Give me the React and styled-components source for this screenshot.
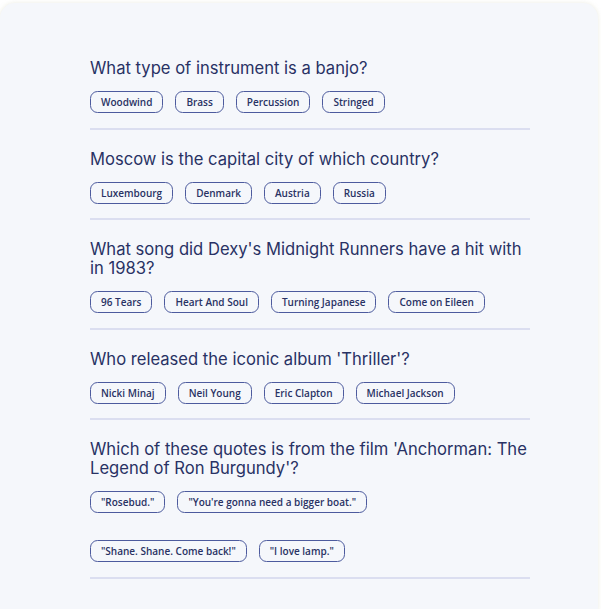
import React from 'react';
import styled, { createGlobalStyle } from 'styled-components';

const GlobalStyle = createGlobalStyle`
  body {
    margin: 0;
    background: #ffffff;
    font-family: Inter, "Liberation Sans", sans-serif;
  }
`;

const Card = styled.main`
  margin-top: 3px;
  width: 598px;
  min-height: 620px;
  box-sizing: border-box;
  background: #f5f7fb;
  border-radius: 15px;
  box-shadow: 0 0 4px rgba(200, 200, 170, 0.35);
  padding: 56px 68px 0 90px;
`;

const Question = styled.section`
  border-bottom: 2px solid #dbdef0;
  padding: 0 0 14.5px;
  margin-bottom: 20px;
`;

const Title = styled.h2`
  margin: 0 0 13px;
  font-family: Inter, "Liberation Sans", sans-serif;
  font-size: 16.6px;
  line-height: 19px;
  font-weight: 400;
  color: #293264;
`;

const Answers = styled.div`
  display: flex;
  flex-wrap: wrap;
  column-gap: 12px;
  row-gap: 27px;
`;

const Answer = styled.button`
  font-family: "Open Sans", "Noto Sans", sans-serif;
  font-size: 10px;
  line-height: 12px;
  font-weight: 600;
  color: #293264;
  background: transparent;
  border: 1px solid #4d5b9e;
  border-radius: 7.5px;
  padding: 4px 10px;
  cursor: pointer;
`;

const questions = [
  {
    q: 'What type of instrument is a banjo?',
    a: ['Woodwind', 'Brass', 'Percussion', 'Stringed'],
  },
  {
    q: 'Moscow is the capital city of which country?',
    a: ['Luxembourg', 'Denmark', 'Austria', 'Russia'],
  },
  {
    q: "What song did Dexy's Midnight Runners have a hit with in 1983?",
    a: ['96 Tears', 'Heart And Soul', 'Turning Japanese', 'Come on Eileen'],
  },
  {
    q: "Who released the iconic album 'Thriller'?",
    a: ['Nicki Minaj', 'Neil Young', 'Eric Clapton', 'Michael Jackson'],
  },
  {
    q: "Which of these quotes is from the film 'Anchorman: The Legend of Ron Burgundy'?",
    a: [
      '"Rosebud."',
      '"You\'re gonna need a bigger boat."',
      '"Shane. Shane. Come back!"',
      '"I love lamp."',
    ],
  },
];

export default function App() {
  return (
    <>
      <GlobalStyle />
      <Card>
        {questions.map(item => (
          <Question key={item.q}>
            <Title>{item.q}</Title>
            <Answers>
              {item.a.map(ans => (
                <Answer key={ans}>{ans}</Answer>
              ))}
            </Answers>
          </Question>
        ))}
      </Card>
    </>
  );
}
